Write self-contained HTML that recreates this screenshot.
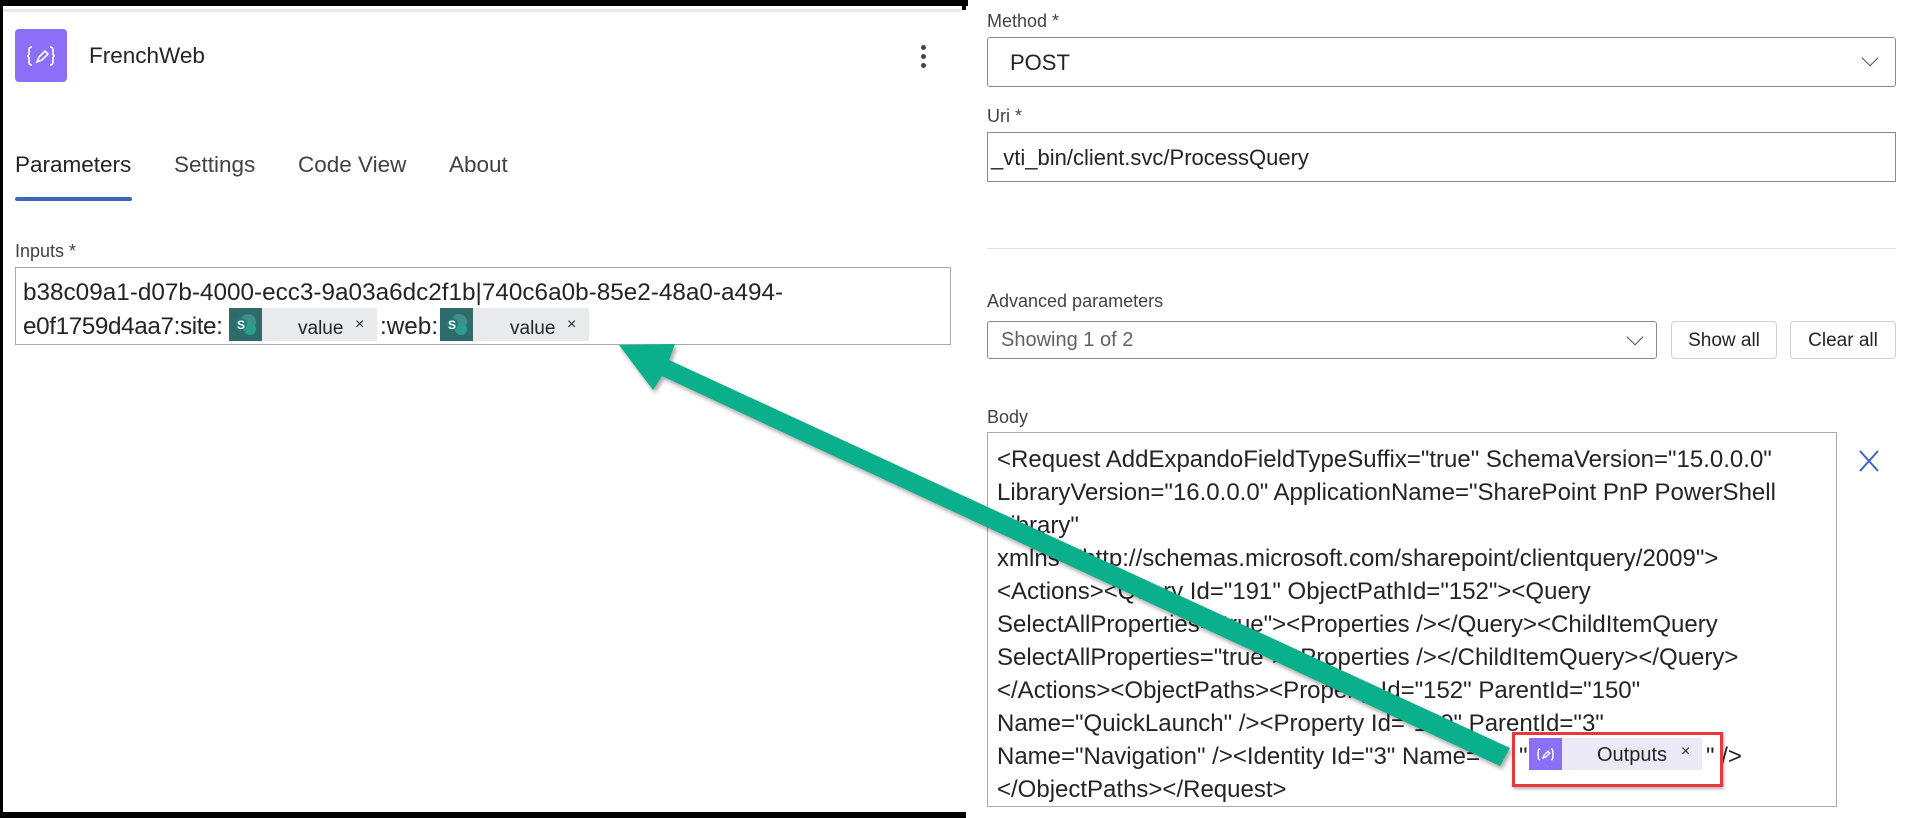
<!DOCTYPE html>
<html><head><meta charset="utf-8"><style>
*{margin:0;padding:0;box-sizing:border-box}
body{width:1919px;height:818px;background:#fff;position:relative;overflow:hidden;font-family:"Liberation Sans",sans-serif;color:#242424}
.a{position:absolute}
.lbl{font-size:18px;color:#424242}
.box{border:1px solid #8a8a8a;background:#fff}
.chev{position:absolute;width:12px;height:12px;border-right:1.5px solid #555;border-bottom:1.5px solid #555;transform:rotate(45deg)}
.btn{border:1px solid #d1d1d1;border-radius:4px;font-size:19px;color:#242424;text-align:center;line-height:37px}
.tab{font-size:22.5px;color:#424242;top:152px}
.ln{position:absolute;left:997px;font-size:24px;white-space:nowrap;color:#242424}
.il{position:absolute;left:23px;font-size:24.3px;white-space:nowrap}
</style></head><body>
<div class="a" style="left:0;top:0;width:968px;height:6px;background:#000"></div>
<div class="a" style="left:0;top:0;width:3px;height:818px;background:#000"></div>
<div class="a" style="left:962px;top:0;width:4px;height:10px;background:#000"></div>
<div class="a" style="left:0;top:812px;width:966px;height:6px;background:#000"></div>
<div class="a" style="left:3px;top:9px;width:958px;height:3px;background:#e6e6e6"></div>

<div class="a" style="left:15px;top:29px;width:52px;height:53px;background:#8b6ff6;border-radius:4px"></div>
<svg class="a" style="left:15px;top:29px" width="52" height="53" viewBox="0 0 52 53"><g fill="none" stroke="#fff" stroke-width="1.6"><path d="M17 18c-3 0-3 2-3 4v3c0 1-1 2-2 2 1 0 2 1 2 2v3c0 2 0 4 3 4"/><path d="M35 18c3 0 3 2 3 4v3c0 1 1 2 2 2-1 0-2 1-2 2v3c0 2 0 4-3 4"/><path d="M22 33l2-5 6-6 3 3-6 6z"/></g></svg>
<div class="a" style="left:89px;top:43px;font-size:22.5px;color:#242424">FrenchWeb</div>
<div class="a" style="left:921px;top:45px;width:5px;height:5px;border-radius:50%;background:#444;box-shadow:0 9px 0 #444,0 18px 0 #444"></div>

<div class="a tab" style="left:15px;color:#242424">Parameters</div>
<div class="a tab" style="left:174px">Settings</div>
<div class="a tab" style="left:298px">Code View</div>
<div class="a tab" style="left:449px">About</div>
<div class="a" style="left:15px;top:197px;width:117px;height:4px;background:#3f64c0;border-radius:2px"></div>

<div class="a lbl" style="left:15px;top:241px">Inputs *</div>
<div class="a box" style="left:15px;top:267px;width:936px;height:78px;border-color:#aaa"></div>
<div class="il" style="top:279px">b38c09a1-d07b-4000-ecc3-9a03a6dc2f1b|740c6a0b-85e2-48a0-a494-</div>
<div class="il" style="top:313px;letter-spacing:-0.4px">e0f1759d4aa7:site:</div>
<div class="a" style="left:229px;top:308px;width:148px;height:33px;background:#e8eaeb"></div>
<div class="a" style="left:229px;top:308px;width:33px;height:33px;background:#2f6b6b"></div>
<svg class="a" style="left:229px;top:308px" width="33" height="33"><circle cx="19" cy="14" r="8" fill="#3f8f8c"/><circle cx="21" cy="21" r="6" fill="#2a9d8f"/><circle cx="12" cy="16" r="6" fill="#1f7a75"/><text x="8" y="21" font-size="12" fill="#fff" font-family="Liberation Sans" font-weight="bold">S</text></svg>
<div class="a" style="left:298px;top:318px;font-size:19px">value</div>
<div class="a" style="left:355px;top:316px;font-size:16px">×</div>
<div class="il" style="left:380px;top:313px">:web:</div>
<div class="a" style="left:440px;top:308px;width:149px;height:33px;background:#e8eaeb"></div>
<div class="a" style="left:440px;top:308px;width:33px;height:33px;background:#2f6b6b"></div>
<svg class="a" style="left:440px;top:308px" width="33" height="33"><circle cx="19" cy="14" r="8" fill="#3f8f8c"/><circle cx="21" cy="21" r="6" fill="#2a9d8f"/><circle cx="12" cy="16" r="6" fill="#1f7a75"/><text x="8" y="21" font-size="12" fill="#fff" font-family="Liberation Sans" font-weight="bold">S</text></svg>
<div class="a" style="left:510px;top:318px;font-size:19px">value</div>
<div class="a" style="left:567px;top:316px;font-size:16px">×</div>

<div class="a lbl" style="left:987px;top:11px">Method *</div>
<div class="a box" style="left:987px;top:37px;width:909px;height:50px;border-radius:3px"></div>
<div class="a" style="left:1010px;top:50px;font-size:22px">POST</div>
<div class="chev" style="left:1864px;top:52px"></div>
<div class="a lbl" style="left:987px;top:106px">Uri *</div>
<div class="a box" style="left:987px;top:132px;width:909px;height:50px"></div>
<div class="a" style="left:991px;top:145px;font-size:22px">_vti_bin/client.svc/ProcessQuery</div>
<div class="a" style="left:987px;top:248px;width:909px;height:1px;background:#e0e0e0"></div>
<div class="a lbl" style="left:987px;top:291px">Advanced parameters</div>
<div class="a box" style="left:987px;top:321px;width:670px;height:38px;border-radius:3px"></div>
<div class="a" style="left:1001px;top:329px;font-size:20px;color:#616161">Showing 1 of 2</div>
<div class="chev" style="left:1629px;top:331px"></div>
<div class="a btn" style="left:1671px;top:321px;width:106px;height:38px">Show all</div>
<div class="a btn" style="left:1790px;top:321px;width:106px;height:38px">Clear all</div>

<div class="a lbl" style="left:987px;top:407px">Body</div>
<div class="a box" style="left:987px;top:432px;width:850px;height:375px;border-color:#aaa"></div>
<svg class="a" style="left:1858px;top:449px" width="22" height="24"><path d="M2 2L20 22M20 2L2 22" stroke="#3b63c4" stroke-width="2"/></svg>
<div class="ln" style="top:446px">&lt;Request AddExpandoFieldTypeSuffix="true" SchemaVersion="15.0.0.0"</div>
<div class="ln" style="top:479px">LibraryVersion="16.0.0.0" ApplicationName="SharePoint PnP PowerShell</div>
<div class="ln" style="top:512px">Library"</div>
<div class="ln" style="top:545px">xmlns="http://schemas.microsoft.com/sharepoint/clientquery/2009"&gt;</div>
<div class="ln" style="top:578px">&lt;Actions&gt;&lt;Query Id="191" ObjectPathId="152"&gt;&lt;Query</div>
<div class="ln" style="top:611px">SelectAllProperties="true"&gt;&lt;Properties /&gt;&lt;/Query&gt;&lt;ChildItemQuery</div>
<div class="ln" style="top:644px">SelectAllProperties="true"&gt;&lt;Properties /&gt;&lt;/ChildItemQuery&gt;&lt;/Query&gt;</div>
<div class="ln" style="top:677px">&lt;/Actions&gt;&lt;ObjectPaths&gt;&lt;Property Id="152" ParentId="150"</div>
<div class="ln" style="top:710px">Name="QuickLaunch" /&gt;&lt;Property Id="150" ParentId="3"</div>
<div class="ln" style="top:743px">Name="Navigation" /&gt;&lt;Identity Id="3" Name="</div>
<div class="ln" style="left:1519px;top:743px">"</div>
<div class="ln" style="left:1706px;top:743px">" /&gt;</div>
<div class="ln" style="top:776px">&lt;/ObjectPaths&gt;&lt;/Request&gt;</div>
<div class="a" style="left:1529px;top:738px;width:173px;height:32px;background:#ebe9f6"></div>
<div class="a" style="left:1529px;top:738px;width:33px;height:32px;background:#8b6ff6"></div>
<svg class="a" style="left:1529px;top:738px" width="33" height="32" viewBox="0 0 52 53"><g fill="none" stroke="#fff" stroke-width="2.4"><path d="M17 18c-3 0-3 2-3 4v3c0 1-1 2-2 2 1 0 2 1 2 2v3c0 2 0 4 3 4"/><path d="M35 18c3 0 3 2 3 4v3c0 1 1 2 2 2-1 0-2 1-2 2v3c0 2 0 4-3 4"/><path d="M22 33l2-5 6-6 3 3-6 6z"/></g></svg>
<div class="a" style="left:1597px;top:744px;font-size:20px">Outputs</div>
<div class="a" style="left:1681px;top:743px;font-size:16px">×</div>
<div class="a" style="left:1512px;top:732px;width:211px;height:55px;border:3px solid #e8383d;box-shadow:1px 2px 3px rgba(0,0,0,.3)"></div>

<svg class="a" style="left:0;top:0;filter:drop-shadow(2px 3px 2px rgba(0,0,0,.35))" width="1919" height="818">
<path d="M619 345 L675 344 L669 360 L1510 748 L1500 766 L662 376 L653 390 Z" fill="#0aaf8b"/>
</svg>
</body></html>
